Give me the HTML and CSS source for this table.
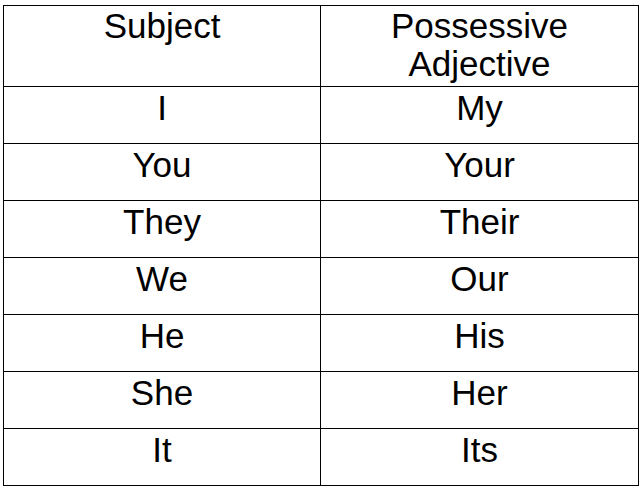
FILE: index.html
```html
<!DOCTYPE html>
<html>
<head>
<meta charset="utf-8">
<link rel="stylesheet" href="styles.css">
</head>
<body>
<div class="table">
  <div class="cell head">Subject</div>
  <div class="cell head">Possessive<br>Adjective</div>
  <div class="cell">I</div><div class="cell">My</div>
  <div class="cell">You</div><div class="cell">Your</div>
  <div class="cell">They</div><div class="cell">Their</div>
  <div class="cell">We</div><div class="cell">Our</div>
  <div class="cell">He</div><div class="cell">His</div>
  <div class="cell">She</div><div class="cell">Her</div>
  <div class="cell">It</div><div class="cell">Its</div>
</div>
</body>
</html>
```
FILE: styles.css
```css
html, body {
  margin: 0;
  padding: 0;
  background: #fff;
}
body {
  padding: 5px 0 0 3px;
  font-family: "Liberation Sans", Arial, sans-serif;
  color: #000;
}
.table {
  display: grid;
  grid-template-columns: 317px 318px;
  grid-template-rows: 81px repeat(7, 57px);
  width: max-content;
  border-left: 1px solid #000;
  border-top: 1px solid #000;
}
.cell {
  box-sizing: border-box;
  border-right: 1px solid #000;
  border-bottom: 1px solid #000;
  text-align: center;
  font-size: 35px;
  line-height: 38px;
  padding-top: 2px;
}
.head {
  padding-top: 1px;
}
```
